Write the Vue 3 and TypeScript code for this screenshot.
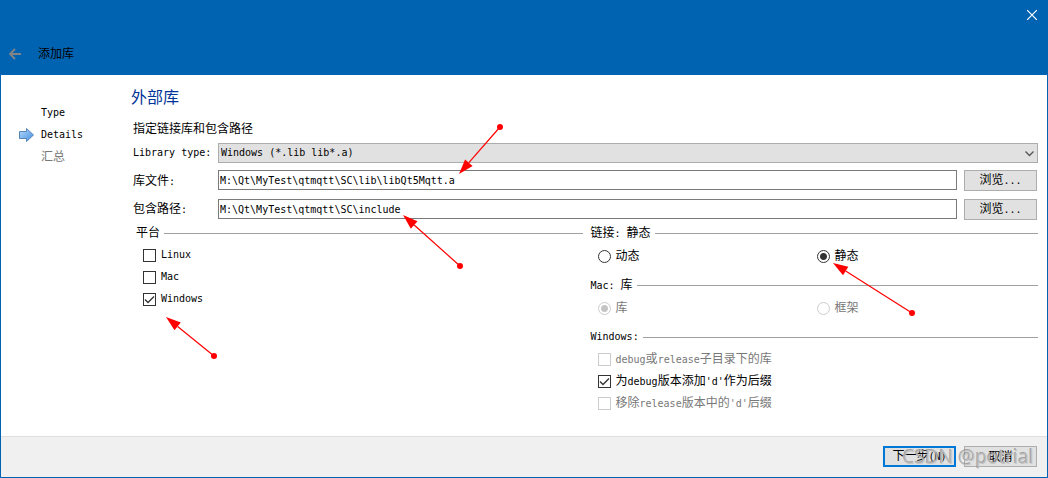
<script setup lang="ts">
import { ref } from 'vue'

interface Run { text: string; latin: boolean }

// Splits a label into Latin and Chinese runs, each of which has its own face and size.
function runs(s: string): Run[] {
  return (s.match(/[\x00-\x7f]+|[^\x00-\x7f]+/g) ?? []).map(text => ({
    text,
    latin: text.charCodeAt(0) < 128,
  }))
}

const steps = [
  { name: 'Type', state: 'done' },
  { name: 'Details', state: 'current' },
  { name: '汇总', state: 'pending' },
]

const libraryType = ref('Windows (*.lib lib*.a)')
const paths = ref([
  { id: 'lib-file', label: '库文件:', value: 'M:\\Qt\\MyTest\\qtmqtt\\SC\\lib\\libQt5Mqtt.a' },
  { id: 'include-path', label: '包含路径:', value: 'M:\\Qt\\MyTest\\qtmqtt\\SC\\include' },
])

const platforms = ref([
  { name: 'Linux', checked: false },
  { name: 'Mac', checked: false },
  { name: 'Windows', checked: true },
])

const linkage = ref('静态')
const macKind = ref('库')
const radioGroups = [
  { id: 'linkage', title: '链接: 静态', options: ['动态', '静态'], model: linkage, disabled: false },
  { id: 'mac', title: 'Mac: 库', options: ['库', '框架'], model: macKind, disabled: true },
]

const windowsOptions = ref([
  { name: 'debug或release子目录下的库', checked: false, disabled: true },
  { name: "为debug版本添加'd'作为后缀", checked: true, disabled: false },
  { name: "移除release版本中的'd'后缀", checked: false, disabled: true },
])

const pointers = [
  { from: [500, 127], to: [459, 174] },
  { from: [460, 266], to: [403, 215] },
  { from: [214, 356], to: [166, 317] },
  { from: [912, 313], to: [833, 263] },
].map(({ from: [x1, y1], to: [x2, y2] }) => {
  const len = Math.hypot(x2 - x1, y2 - y1)
  const ux = (x2 - x1) / len
  const uy = (y2 - y1) / len
  const bx = x2 - ux * 15
  const by = y2 - uy * 15
  return {
    x1, y1, bx, by,
    head: `${x2},${y2} ${bx - uy * 5},${by + ux * 5} ${bx + uy * 5},${by - ux * 5}`,
  }
})
</script>

<template>
  <div class="wizard">
    <header class="titlebar">
      <button class="close" type="button" aria-label="关闭">
        <svg width="10" height="10" viewBox="0 0 10 10"><path d="M0 0L10 10M10 0L0 10" stroke="#fff" stroke-width="1.2" /></svg>
      </button>
      <div class="heading">
        <button class="back" type="button" aria-label="返回" disabled>
          <svg width="12" height="12" viewBox="0 0 12 12"><path d="M12 6H1M6 1L1 6L6 11" fill="none" stroke="#848484" stroke-width="1.8" /></svg>
        </button>
        <span>添加库</span>
      </div>
    </header>

    <div class="body">
      <ol class="steps">
        <li v-for="s in steps" :key="s.name" :class="s.state">
          <span class="marker">
            <svg v-if="s.state === 'current'" width="17" height="16" viewBox="0 0 17 16">
              <defs>
                <linearGradient id="arrow-fill" x1="0" y1="0" x2="1" y2="1">
                  <stop offset="0" stop-color="#b9dcfb" />
                  <stop offset="1" stop-color="#3f8ae0" />
                </linearGradient>
              </defs>
              <path d="M1.500 4.500H8.500V1.500L15.500 8L8.500 14.500V11.500H1.500Z" fill="url(#arrow-fill)" stroke="#5685b8" />
            </svg>
          </span>
          <span v-for="(r, i) in runs(s.name)" :key="i" :class="{ latin: r.latin }">{{ r.text }}</span>
        </li>
      </ol>

      <main class="page">
        <h1>外部库</h1>
        <p class="intro">指定链接库和包含路径</p>

        <div class="form">
          <label for="library-type" class="latin">Library type:</label>
          <div class="select-box">
            <select id="library-type" v-model="libraryType" class="latin">
              <option>Windows (*.lib lib*.a)</option>
            </select>
            <svg class="chevron" width="9" height="6" viewBox="0 0 9 6"><path d="M0.500 0.500L4.500 4.500L8.500 0.500" fill="none" stroke="#555" stroke-width="1.300" /></svg>
          </div>
          <template v-for="p in paths" :key="p.id">
            <label :for="p.id"><span v-for="(r, i) in runs(p.label)" :key="i" :class="{ latin: r.latin }">{{ r.text }}</span></label>
            <input :id="p.id" v-model="p.value" class="field latin" type="text" spellcheck="false">
            <button class="push" type="button">浏览<span class="latin">...</span></button>
          </template>
        </div>

        <div class="groups">
          <fieldset class="platforms">
            <legend>平台</legend>
            <label v-for="p in platforms" :key="p.name" class="option">
              <input v-model="p.checked" type="checkbox">
              <span class="latin">{{ p.name }}</span>
            </label>
          </fieldset>

          <div class="linking">
            <fieldset v-for="g in radioGroups" :key="g.id" class="radios" :disabled="g.disabled">
              <legend><span v-for="(r, i) in runs(g.title)" :key="i" :class="{ latin: r.latin }">{{ r.text }}</span></legend>
              <div class="pair">
                <label v-for="o in g.options" :key="o" class="option" :class="{ off: g.disabled }">
                  <input v-model="g.model.value" type="radio" :name="g.id" :value="o">
                  <span>{{ o }}</span>
                </label>
              </div>
            </fieldset>

            <fieldset class="windows">
              <legend class="latin">Windows:</legend>
              <label v-for="o in windowsOptions" :key="o.name" class="option" :class="{ off: o.disabled }">
                <input v-model="o.checked" type="checkbox" :disabled="o.disabled">
                <span><span v-for="(r, i) in runs(o.name)" :key="i" :class="{ latin: r.latin }">{{ r.text }}</span></span>
              </label>
            </fieldset>
          </div>
        </div>
      </main>
    </div>

    <footer class="actions">
      <button class="push primary" type="button">下一步<span class="latin">(N)</span></button>
      <button class="push" type="button">取消</button>
      <span class="watermark">CSDN @potrial</span>
    </footer>

    <svg class="pointers" width="1048" height="478" aria-hidden="true">
      <g v-for="(p, i) in pointers" :key="i" fill="#f00" stroke="none">
        <line :x1="p.x1" :y1="p.y1" :x2="p.bx" :y2="p.by" stroke="#f00" stroke-width="1.200" />
        <polygon :points="p.head" />
        <circle :cx="p.x1" :cy="p.y1" r="3" />
      </g>
    </svg>
  </div>
</template>

<style>
body { background: #fff; }
</style>

<style scoped>
.wizard, .wizard * { box-sizing: border-box; }
.wizard {
  position: relative;
  display: flex;
  flex-direction: column;
  min-height: 100vh;
  border: 1px solid #0063b1;
  border-top: 0;
  background: #fff;
  color: #000;
  font: 12px/16px "Liberation Sans", "Noto Sans CJK SC", sans-serif;
  white-space: pre;
}
button, select, input { margin: 0; font: inherit; color: inherit; }
.latin { font-family: "DejaVu Sans Mono", "Liberation Mono", monospace; font-size: 10px; }

.titlebar { height: 75px; background: #0063b1; }
.close, .back { display: flex; padding: 0; border: 0; background: none; }
.close { margin-left: auto; padding: 10px; }
.heading { display: flex; align-items: center; gap: 17px; padding: 16px 8px 0; }

.body { flex: 1; display: flex; }
.steps { width: 130px; margin: 0; padding: 27px 0 0 17px; list-style: none; }
.steps li { display: flex; align-items: center; height: 22px; }
.steps .marker { display: flex; width: 23px; }
.steps .pending { color: #787878; }

.page { flex: 1; min-width: 0; padding: 11px 9px 16px 0; }
h1 { margin: 0; color: #039; font-size: 16px; font-weight: 400; line-height: 24px; }
.intro { margin: 11px 0 6px 2px; }

.form {
  display: grid;
  grid-template-columns: 78px 1fr 74px;
  grid-template-rows: 20px 22px 21px;
  gap: 7px;
  align-items: start;
  padding-left: 2px;
}
.form label { align-self: center; }
.select-box { grid-column: 2 / 4; position: relative; }
select {
  display: block;
  width: 100%;
  height: 20px;
  padding: 0 2px;
  appearance: none;
  border: 1px solid #adadad;
  border-radius: 0;
  background: #e1e1e1;
}
.chevron { position: absolute; right: 4px; top: 8px; pointer-events: none; }
.field {
  width: 100%;
  height: 20px;
  padding: 0 1px;
  border: 1px solid #7a7a7a;
  border-radius: 0;
  background: #fff;
}
.push {
  width: 73px;
  height: 21px;
  padding: 0;
  border: 1px solid #adadad;
  background: #e1e1e1;
}

fieldset { min-width: 0; margin: 0; padding: 0; border: 0; border-top: 1px solid #a0a0a0; }
legend { margin-bottom: 3px; padding: 0 4px 0 0; line-height: 16px; }
.groups { display: grid; grid-template-columns: 451fr 447fr; gap: 8px; margin-top: 5px; }
.platforms legend { padding-left: 5px; }
.platforms .option { margin-left: 12px; }
.option { display: flex; align-items: center; gap: 5px; height: 22px; }
.option.off { color: #787878; }
.linking .option { margin-left: 7px; }
.radios { margin-bottom: 10px; }
.pair { display: grid; grid-template-columns: 219px 1fr; }

.option input {
  flex: none;
  width: 13px;
  height: 13px;
  appearance: none;
  border: 1px solid #333;
  background: #fff;
}
.option input[type="radio"] { border-radius: 50%; }
.option input[type="radio"]:checked { background: radial-gradient(circle, #333 3px, #fff 4px); }
.option input[type="checkbox"]:checked {
  background: #fff url("data:image/svg+xml,%3Csvg xmlns='http://www.w3.org/2000/svg' viewBox='0 0 11 11'%3E%3Cpath d='M1 5.500L4 8.500L10 2.500' fill='none' stroke='%23333' stroke-width='1.300'/%3E%3C/svg%3E");
}
.option input:disabled { border-color: #ccc; }
.option input[type="radio"]:checked:disabled { background: radial-gradient(circle, #c4c4c4 3px, #fff 4px); }

.actions {
  position: relative;
  display: flex;
  justify-content: flex-end;
  gap: 8px;
  padding: 9px 10px 10px;
  border-top: 1px solid #dfdfdf;
  background: #f0f0f0;
}
.primary { border: 2px solid #0078d7; }
.watermark {
  position: absolute;
  right: 13px;
  top: 8px;
  color: rgba(190, 190, 190, 0.75);
  font: 19px/24px "Noto Sans", sans-serif;
  text-shadow: -1px -1px 0 rgba(120, 120, 120, 0.6);
  pointer-events: none;
}
.pointers { position: absolute; left: -1px; top: 0; pointer-events: none; }
</style>
